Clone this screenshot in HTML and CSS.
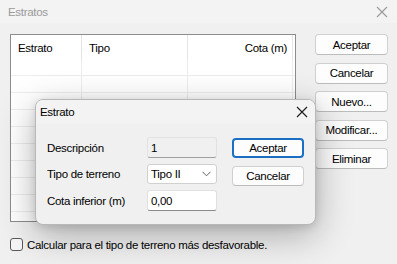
FILE: index.html
```html
<!DOCTYPE html>
<html lang="es">
<head>
<meta charset="utf-8">
<link rel="stylesheet" href="styles.css">
</head>
<body>
<div class="window">
  <div class="titlebar">
    <span class="title">Estratos</span>
    <svg class="close" width="12" height="12" viewBox="0 0 12 12"><path d="M1 1L11 11M11 1L1 11" stroke="#9a9a9a" stroke-width="1.1" fill="none"/></svg>
  </div>
  <div class="content">
    <div class="list">
      <div class="header">
        <div class="col c1">Estrato</div>
        <div class="col c2">Tipo</div>
        <div class="col c3">Cota (m)</div>
        <div class="col c4"></div>
      </div>
      <div class="rows">
        <div class="row"><div class="cell c1"></div><div class="cell c2"></div><div class="cell c3"></div></div>
        <div class="row"><div class="cell c1"></div><div class="cell c2"></div><div class="cell c3"></div></div>
        <div class="row"><div class="cell c1"></div><div class="cell c2"></div><div class="cell c3"></div></div>
        <div class="row"><div class="cell c1"></div><div class="cell c2"></div><div class="cell c3"></div></div>
        <div class="row"><div class="cell c1"></div><div class="cell c2"></div><div class="cell c3"></div></div>
        <div class="row"><div class="cell c1"></div><div class="cell c2"></div><div class="cell c3"></div></div>
        <div class="row"><div class="cell c1"></div><div class="cell c2"></div><div class="cell c3"></div></div>
        <div class="row"><div class="cell c1"></div><div class="cell c2"></div><div class="cell c3"></div></div>
        <div class="row"><div class="cell c1"></div><div class="cell c2"></div><div class="cell c3"></div></div>
      </div>
    </div>
    <div class="buttons">
      <div class="btn">Aceptar</div>
      <div class="btn">Cancelar</div>
      <div class="btn">Nuevo...</div>
      <div class="btn">Modificar...</div>
      <div class="btn">Eliminar</div>
    </div>
  </div>
  <div class="check-row">
    <span class="checkbox"></span>
    <span class="check-label">Calcular para el tipo de terreno más desfavorable.</span>
  </div>
</div>

<div class="dialog">
  <div class="dtitlebar">
    <span class="dtitle">Estrato</span>
    <svg class="dclose" width="12" height="12" viewBox="0 0 12 12"><path d="M1 1L11 11M11 1L1 11" stroke="#1a1a1a" stroke-width="1.1" fill="none"/></svg>
  </div>
  <div class="dbody">
    <div class="form">
      <div class="frow">
        <span class="flabel">Descripción</span>
        <div class="field disabled">1</div>
      </div>
      <div class="frow">
        <span class="flabel">Tipo de terreno</span>
        <div class="field select"><span>Tipo II</span>
          <svg width="9" height="6" viewBox="0 0 9 6"><path d="M0.5 0.8L4.5 4.8L8.5 0.8" stroke="#606060" stroke-width="1" fill="none"/></svg>
        </div>
      </div>
      <div class="frow">
        <span class="flabel">Cota inferior (m)</span>
        <div class="field edit">0,00</div>
      </div>
    </div>
    <div class="dbuttons">
      <div class="btn dbtn focus">Aceptar</div>
      <div class="btn dbtn">Cancelar</div>
    </div>
  </div>
</div>
</body>
</html>
```

FILE: styles.css
```css
html, body {
  margin: 0;
  padding: 0;
}
body {
  width: 397px;
  height: 264px;
  overflow: hidden;
  background: #f0f0f0;
  font-family: "Liberation Sans", Arial, sans-serif;
  font-size: 11.5px;
  letter-spacing: -0.3px;
  color: #000;
  position: relative;
}
.window {
  width: 397px;
  height: 264px;
  display: flex;
  flex-direction: column;
}
.titlebar {
  height: 23px;
  background: #f3f3f3;
  display: flex;
  align-items: center;
  justify-content: space-between;
  padding: 0 9px 0 8px;
}
.title {
  color: #9a9a9a;
}
.content {
  display: flex;
  padding: 11px 0 0 10px;
  gap: 19px;
}
.list {
  width: 284px;
  height: 186px;
  border: 1px solid #8c8c8c;
  background: #fff;
  overflow: hidden;
}
.header {
  display: flex;
  height: 25px;
}
.col {
  height: 25px;
  line-height: 26px;
  box-sizing: border-box;
  border-right: 1px solid #e5e5e5;
  padding: 0 7px;
  white-space: nowrap;
  flex-shrink: 0;
}
.c1 { width: 71px; flex-shrink: 0; }
.c2 { width: 106px; flex-shrink: 0; }
.c3 { width: 105px; text-align: right; padding-right: 5px; flex-shrink: 0; }
.col.c4 { flex: 1 1 auto; border-right: none; padding: 0; }
.row {
  display: flex;
  height: 17px;
  box-sizing: border-box;
  border-bottom: 1px solid #ededed;
}
.row:first-child {
  height: 16px;
}
.cell {
  box-sizing: border-box;
  border-right: 1px solid #ededed;
  height: 100%;
}
.buttons {
  display: flex;
  flex-direction: column;
  gap: 7.5px;
}
.btn {
  width: 73px;
  height: 21px;
  box-sizing: border-box;
  border: 1px solid #d0d0d0;
  border-bottom-color: #bcbcbc;
  border-radius: 4px;
  background: #fdfdfd;
  display: flex;
  align-items: center;
  justify-content: center;
}
.check-row {
  display: flex;
  align-items: center;
  gap: 4px;
  margin-top: 16px;
  padding-left: 10px;
}
.checkbox {
  width: 13px;
  height: 13px;
  box-sizing: border-box;
  border: 1px solid #5a5a5a;
  border-radius: 3px;
  background: #f6f6f6;
}
.dialog {
  position: absolute;
  left: 35px;
  top: 99px;
  width: 281px;
  height: 126px;
  background: #f0f0f0;
  border: 1px solid #b8b8b8;
  box-sizing: border-box;
  border-radius: 8px;
  box-shadow: 0 10px 36px rgba(0, 0, 0, 0.30), 0 2px 8px rgba(0, 0, 0, 0.12);
  overflow: hidden;
}
.dtitlebar {
  height: 23px;
  background: #f3f3f3;
  display: flex;
  align-items: center;
  justify-content: space-between;
  padding: 0 7px 0 4px;
}
.dbody {
  display: flex;
  padding: 14px 0 0 11px;
}
.form {
  display: flex;
  flex-direction: column;
  gap: 6px;
}
.frow {
  display: flex;
  align-items: center;
}
.flabel {
  width: 100px;
}
.field {
  width: 70px;
  height: 21px;
  box-sizing: border-box;
  display: flex;
  align-items: center;
  padding-left: 3px;
}
.field.disabled {
  background: #f0f0f0;
  border: 1px solid #e2e2e2;
  border-bottom: 1px solid #a0a0a0;
  border-radius: 3px;
}
.field.select {
  background: #fff;
  border: 1px solid #d0d0d0;
  border-radius: 3px;
  height: 20px;
  justify-content: space-between;
  padding-right: 5px;
}
.field.edit {
  background: #fff;
  border: 1px solid #e0e0e0;
  border-bottom: 1px solid #8a8a8a;
  border-radius: 3px;
}
.dbuttons {
  display: flex;
  flex-direction: column;
  gap: 8px;
  margin-left: 15px;
  padding-top: 1px;
}
.dbtn {
  width: 72px;
  height: 20px;
}
.dbtn.focus {
  border: 2px solid #1a6fc4;
  border-radius: 4px;
}
```
